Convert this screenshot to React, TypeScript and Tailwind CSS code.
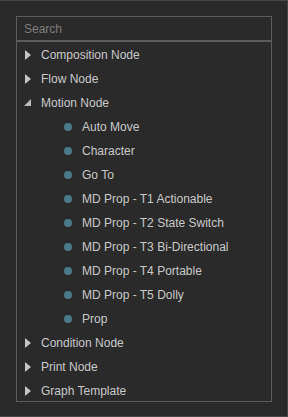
const groups: { name: string; open?: boolean; items?: string[] }[] = [
  { name: "Composition Node" },
  { name: "Flow Node" },
  {
    name: "Motion Node",
    open: true,
    items: [
      "Auto Move",
      "Character",
      "Go To",
      "MD Prop - T1 Actionable",
      "MD Prop - T2 State Switch",
      "MD Prop - T3 Bi-Directional",
      "MD Prop - T4 Portable",
      "MD Prop - T5 Dolly",
      "Prop",
    ],
  },
  { name: "Condition Node" },
  { name: "Print Node" },
  { name: "Graph Template" },
];

const Closed = () => (
  <svg width="6" height="10" viewBox="0 0 6 10" className="shrink-0">
    <path d="M0 0 L6 5 L0 10 Z" fill="#c4c4c4" />
  </svg>
);

const Open = () => (
  <svg width="7" height="7" viewBox="0 0 7 7" className="shrink-0">
    <path d="M7 0 L7 7 L0 7 Z" fill="#bdbdbd" />
  </svg>
);

export default function App() {
  return (
    <div
      className="w-[288px] h-[417px] bg-[#2a2a2a] border-t border-b border-r border-[#474747] pt-[15px] pl-4 pr-4 text-[12px] text-[#c9c9c9]"
      style={{ fontFamily: '"Liberation Sans", Arial, sans-serif' }}
    >
      <div className="w-[256px] flex flex-col">
        <div className="h-[25px] border border-[#5c5c5c] flex items-center pl-[7px] pt-[1px] text-[#7e7e7e]">
          Search
        </div>
        <div className="h-[361px] border border-[#5c5c5c] overflow-hidden">
          {groups.map((g) => (
            <div key={g.name}>
              <div className="h-6 flex items-center pl-[7px] pt-[1px]">
                <div className="w-[7px] flex justify-center">{g.open ? <Open /> : <Closed />}</div>
                <span className="ml-[10px]">{g.name}</span>
              </div>
              {g.open &&
                g.items?.map((it) => (
                  <div key={it} className="h-6 flex items-center pl-[47px] pt-[1px]">
                    <span className="w-[8px] h-[8px] rounded-full bg-[#4b7b88]" />
                    <span className="ml-[10px]">{it}</span>
                  </div>
                ))}
            </div>
          ))}
        </div>
      </div>
    </div>
  );
}
